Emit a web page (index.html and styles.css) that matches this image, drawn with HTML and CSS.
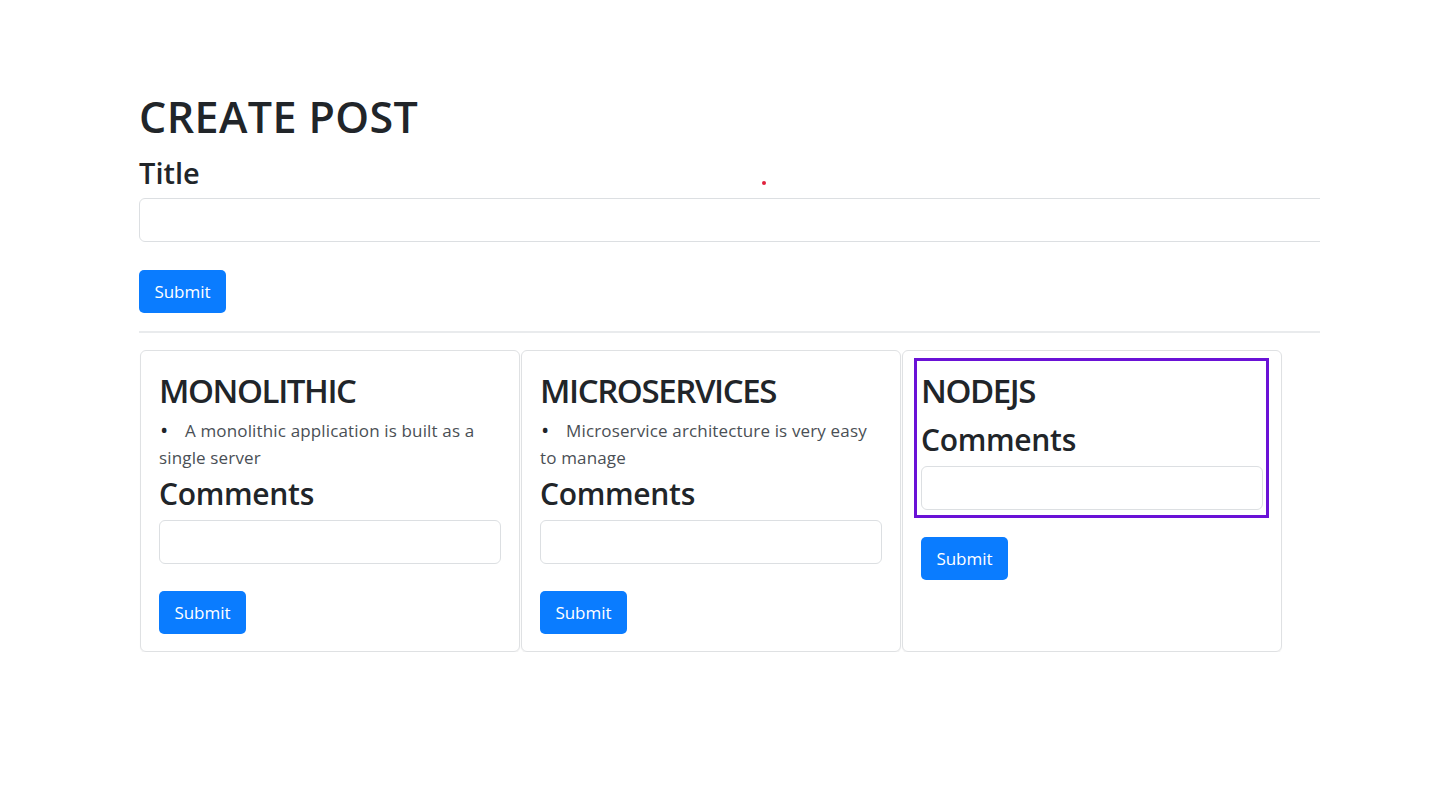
FILE: index.html
```html
<!DOCTYPE html>
<html>
<head>
<meta charset="utf-8">
<link rel="stylesheet" href="styles.css">
</head>
<body>
<div class="page">
  <h1 class="page-title">CREATE POST</h1>
  <form class="create-form">
    <label class="form-label">Title</label>
    <div class="clip">
      <input class="field field-wide" type="text">
    </div>
    <button class="btn" type="button">Submit</button>
  </form>
  <hr class="divider">
  <div class="cards">
    <div class="card">
      <h2 class="card-title">MONOLITHIC</h2>
      <ul class="points">
        <li>A monolithic application is built as a single server</li>
      </ul>
      <h3 class="comments-title">Comments</h3>
      <input class="field" type="text">
      <button class="btn" type="button">Submit</button>
    </div>
    <div class="card">
      <h2 class="card-title">MICROSERVICES</h2>
      <ul class="points">
        <li>Microservice architecture is very easy to manage</li>
      </ul>
      <h3 class="comments-title">Comments</h3>
      <input class="field" type="text">
      <button class="btn" type="button">Submit</button>
    </div>
    <div class="card card-highlight">
      <h2 class="card-title">NODEJS</h2>
      <ul class="points"></ul>
      <h3 class="comments-title">Comments</h3>
      <input class="field" type="text">
      <button class="btn" type="button">Submit</button>
      <div class="highlight"></div>
    </div>
  </div>
  <span class="dot"></span>
</div>
</body>
</html>
```
FILE: styles.css
```css
html, body {
  margin: 0;
  padding: 0;
  background: #ffffff;
}
body {
  font-family: "Open Sans", "Noto Sans", sans-serif;
  color: #212529;
}
.page {
  position: relative;
  width: 1181px;
  padding: 91px 0 0 139px;
}
.page-title {
  margin: 0;
  font-size: 43px;
  font-weight: 600;
  line-height: 52px;
  letter-spacing: 0.4px;
}
.create-form {
  display: flex;
  flex-direction: column;
  align-items: flex-start;
}
.form-label {
  font-size: 29px;
  font-weight: 600;
  line-height: 38px;
  margin-top: 11px;
  margin-bottom: 6px;
}
.clip {
  width: 100%;
  overflow: hidden;
}
.field {
  display: block;
  box-sizing: border-box;
  height: 44px;
  width: 100%;
  border: 1px solid #dcdfe2;
  border-radius: 6px;
  background: #fff;
  margin: 0;
  padding: 0 12px;
}
.field-wide {
  width: calc(100% + 20px);
}
.btn {
  display: inline-block;
  box-sizing: border-box;
  height: 43px;
  width: 87px;
  margin-top: 28px;
  background: #0a7cff;
  color: #fff;
  border: none;
  border-radius: 5px;
  font-family: "Open Sans", "Noto Sans", sans-serif;
  font-size: 17px;
  padding: 0;
}
.divider {
  margin: 18px 0 0 0;
  border: none;
  border-top: 2px solid #e9ebed;
  height: 0;
}
.cards {
  display: flex;
  gap: 1px;
  margin-top: 17px;
  margin-left: 1px;
}
.card {
  position: relative;
  box-sizing: border-box;
  width: 380px;
  height: 302px;
  border: 1px solid #dfe1e3;
  border-radius: 6px;
  padding: 19px 18px 0 18px;
  display: flex;
  flex-direction: column;
  align-items: flex-start;
  box-shadow: 0 1px 1px rgba(0,0,0,0.06);
}
.card-title {
  margin: 0;
  font-size: 33px;
  font-weight: 600;
  line-height: 42px;
  letter-spacing: -1.4px;
}
.points {
  list-style: none;
  margin: 0;
  padding: 0;
  font-size: 17px;
  line-height: 27px;
  letter-spacing: 0.15px;
  color: #4a4f55;
}
.points li {
  padding-top: 5px;
  margin-bottom: -5px;
}
.points li::before {
  content: "\2022";
  display: inline-block;
  width: 26px;
  padding-left: 1px;
  box-sizing: border-box;
  font-size: 22px;
  line-height: 0;
  vertical-align: -1px;
  color: #212529;
}
.comments-title {
  margin: 8px 0 6px 0;
  font-size: 30px;
  font-weight: 600;
  line-height: 40px;
  letter-spacing: -0.3px;
}
.card .btn {
  margin-top: 27px;
}
.highlight {
  position: absolute;
  left: 11px;
  top: 7px;
  width: 355px;
  height: 160px;
  box-sizing: border-box;
  border: 3px solid #6a12d6;
}
.dot {
  position: absolute;
  left: 762px;
  top: 181px;
  width: 4px;
  height: 4px;
  border-radius: 50%;
  background: #e0203c;
}
```
